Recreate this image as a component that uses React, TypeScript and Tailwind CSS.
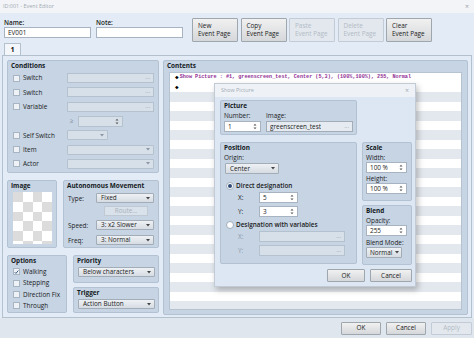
import React from 'react';

type Kids = { children?: React.ReactNode; className?: string };

const Group = ({ title, className = '', children }: Kids & { title: string }) => (
  <div className={`rounded-[2px] border border-[#b2c2d3] bg-[#c6d4e4] ${className}`}>
    <div className="pl-[3px] text-[6.4px] font-bold leading-[10px] text-[#141a22]">{title}</div>
    {children}
  </div>
);

const Spin = () => (
  <svg width="4" height="7" viewBox="0 0 4 7" className="shrink-0">
    <path d="M0.5 2.5 L2 0.8 L3.5 2.5 Z" fill="#555" />
    <path d="M0.5 4.5 L2 6.2 L3.5 4.5 Z" fill="#555" />
  </svg>
);

const Arrow = ({ dim }: { dim?: boolean }) => (
  <svg width="4" height="3" viewBox="0 0 4 3" className="shrink-0">
    <path d="M0 0 L4 0 L2 2.5 Z" fill={dim ? '#8a96a4' : '#444'} />
  </svg>
);

const Field = ({
  value = '',
  className = '',
  spin,
  dots,
  disabled,
}: {
  value?: string;
  className?: string;
  spin?: boolean;
  dots?: boolean;
  disabled?: boolean;
}) => (
  <div
    className={`flex items-center justify-between border px-[3px] text-[6.4px] ${
      disabled ? 'border-[#b4c1cf] bg-[#d7dfe8] text-[#9aa6b3]' : 'border-[#a7b3c0] bg-white text-[#1b1b1b]'
    } ${className}`}
  >
    <span className="truncate">{value}</span>
    {spin && <Spin />}
    {dots && <span className="text-[6px] leading-none text-[#7e8a97]">···</span>}
  </div>
);

const Drop = ({ value = '', className = '', disabled }: { value?: string; className?: string; disabled?: boolean }) => (
  <div
    className={`flex items-center justify-between rounded-[1px] border pl-[4px] pr-[3px] text-[6.4px] ${
      disabled
        ? 'border-[#b4c1cf] bg-[#d7dfe8]'
        : 'border-[#a3adb8] bg-gradient-to-b from-[#eef1f4] to-[#d6dce3] text-[#1b1b1b]'
    } ${className}`}
  >
    <span className="whitespace-nowrap">{value}</span>
    <Arrow dim={disabled} />
  </div>
);

const Btn = ({ children, className = '', disabled }: Kids & { disabled?: boolean }) => (
  <div
    className={`flex items-center rounded-[1px] border text-[6.4px] leading-[8px] ${
      disabled
        ? 'border-[#c3ccd6] bg-[#e3e8ee] text-[#b2bbc5]'
        : 'border-[#9ea6ae] bg-gradient-to-b from-[#f1f1f1] to-[#d5d7da] text-[#1b1b1b]'
    } ${className}`}
  >
    {children}
  </div>
);

const Check = ({ label, checked, className = '' }: { label: string; checked?: boolean; className?: string }) => (
  <div className={`flex items-center gap-[3px] text-[6.4px] text-[#1b1b1b] ${className}`}>
    <div className="flex h-[7px] w-[7px] shrink-0 items-center justify-center border border-[#a7b4c2] bg-[#eef2f6]">
      {checked && (
        <svg width="6" height="6" viewBox="0 0 6 6">
          <path d="M0.8 3.2 L2.3 4.7 L5.2 1.2" stroke="#1d3b64" strokeWidth="1" fill="none" />
        </svg>
      )}
    </div>
    <span>{label}</span>
  </div>
);

const Radio = ({ label, on }: { label: string; on?: boolean }) => (
  <div className="flex h-[10px] items-center gap-[2px] text-[6.4px] font-semibold text-[#1b1b1b]">
    <div className="flex h-[8px] w-[8px] items-center justify-center rounded-full border border-[#9fadbc] bg-white">
      {on && <div className="h-[4px] w-[4px] rounded-full bg-[#2c4a73]" />}
    </div>
    <span>{label}</span>
  </div>
);

const Lbl = ({ children, className = '' }: Kids) => (
  <div className={`text-[6.4px] leading-[9px] text-[#1b1b1b] ${className}`}>{children}</div>
);

export default function App() {
  const rows = Array.from({ length: 25 });
  return (
    <div className="relative h-[338px] w-[474px] overflow-hidden bg-[#e3ecf6] font-['Open_Sans',sans-serif]">
      {/* title bar */}
      <div className="flex h-[13px] items-center justify-between bg-[#f2f4f7] pl-[3px] pr-[5px]">
        <span className="text-[5.4px] text-[#a2aab3]">ID:001 - Event Editor</span>
        <span className="text-[7px] leading-none text-[#9aa2ab]">×</span>
      </div>

      {/* name / note / page buttons */}
      <div className="flex h-[30px] items-start pl-[4px] pt-[5px]">
        <div className="w-[87px]">
          <Lbl className="h-[9px] font-semibold">Name:</Lbl>
          <Field value="EV001" className="h-[11px]" />
        </div>
        <div className="ml-[5px] w-[87px]">
          <Lbl className="h-[9px] font-semibold">Note:</Lbl>
          <Field className="h-[11px]" />
        </div>
        <div className="ml-[9px] flex gap-[2.5px]">
          {[
            ['New', false],
            ['Copy', false],
            ['Paste', true],
            ['Delete', true],
            ['Clear', false],
          ].map(([t, d]) => (
            <Btn key={t as string} disabled={d as boolean} className="h-[24px] w-[46px] pl-[5px]">
              <div>
                {t as string}
                <br />
                Event Page
              </div>
            </Btn>
          ))}
        </div>
      </div>

      {/* tab */}
      <div className="ml-[4px] flex h-[12px] w-[17px] items-center justify-center border border-b-0 border-[#b3c1cf] bg-[#f3f7fb] text-[6.4px] font-bold">
        1
      </div>

      {/* tab panel */}
      <div className="ml-[2px] flex h-[263px] w-[470px] border border-[#b3c1cf] pl-[4px] pr-[3px] pt-[4px]">
        {/* left column */}
        <div className="flex w-[152px] flex-col">
          <Group title="Conditions" className="h-[113px]">
            <div className="pl-[5px] pr-[4px]">
              {['Switch', 'Switch', 'Variable'].map((t, i) => (
                <div key={i} className="flex h-[14.3px] items-center justify-between">
                  <Check label={t} />
                  <Field disabled dots className="h-[10px] w-[87px]" />
                </div>
              ))}
              <div className="flex h-[14.3px] items-center">
                <span className="ml-[57px] text-[6.4px] text-[#8b97a4]">≥</span>
                <Field disabled spin className="ml-[4px] h-[11px] w-[45px]" />
              </div>
              <div className="flex h-[14.3px] items-center">
                <Check label="Self Switch" />
                <Drop disabled className="ml-auto mr-[46px] h-[10px] w-[41px]" />
              </div>
              {['Item', 'Actor'].map((t) => (
                <div key={t} className="flex h-[14.3px] items-center justify-between">
                  <Check label={t} />
                  <Drop disabled className="h-[10px] w-[87px]" />
                </div>
              ))}
            </div>
          </Group>

          <div className="mt-[7px] flex h-[68px] gap-[6px]">
            <Group title="Image" className="w-[50px]">
              <div className="ml-[5px] mt-[1px] grid h-[52px] w-[39px] grid-cols-4 overflow-hidden bg-white">
                {Array.from({ length: 24 }).map((_, i) => (
                  <div
                    key={i}
                    className={`h-[9.75px] ${(Math.floor(i / 4) + (i % 4)) % 2 ? 'bg-white' : 'bg-[#dcdcdc]'}`}
                  />
                ))}
              </div>
            </Group>
            <Group title="Autonomous Movement" className="flex-1">
              <div className="pl-[4px] pr-[4px]">
                <div className="mt-[2px] flex h-[10px] items-center justify-between">
                  <Lbl>Type:</Lbl>
                  <Drop value="Fixed" className="h-[10px] w-[58px]" />
                </div>
                <div className="mt-[3px] flex justify-end pr-[6px]">
                  <div className="flex h-[10px] w-[44px] items-center justify-center border border-[#bfc9d4] bg-[#d9e1ea] text-[6.4px] text-[#a8b2bd]">
                    Route...
                  </div>
                </div>
                <div className="mt-[4px] flex h-[10px] items-center justify-between">
                  <Lbl>Speed:</Lbl>
                  <Drop value="3: x2 Slower" className="h-[10px] w-[58px]" />
                </div>
                <div className="mt-[5px] flex h-[10px] items-center justify-between">
                  <Lbl>Freq:</Lbl>
                  <Drop value="3: Normal" className="h-[10px] w-[58px]" />
                </div>
              </div>
            </Group>
          </div>

          <div className="mt-[7px] flex h-[58px] gap-[6px]">
            <Group title="Options" className="w-[60px]">
              <div className="flex flex-col gap-[1.7px] pl-[5px] pt-[1px]">
                <Check label="Walking" checked />
                <Check label="Stepping" />
                <Check label="Direction Fix" />
                <Check label="Through" />
              </div>
            </Group>
            <div className="flex flex-1 flex-col gap-[4px]">
              <Group title="Priority" className="h-[28px]">
                <Drop value="Below characters" className="ml-[4px] mt-[1px] h-[10px] w-[77px]" />
              </Group>
              <Group title="Trigger" className="h-[26px]">
                <Drop value="Action Button" className="ml-[4px] mt-[1px] h-[10px] w-[77px]" />
              </Group>
            </div>
          </div>
        </div>

        {/* contents */}
        <Group title="Contents" className="ml-[4px] h-[255px] flex-1">
          <div className="mx-[5px] mt-[1px] h-[238px] overflow-hidden border border-[#b5c2cf] bg-white">
            {rows.map((_, i) => (
              <div
                key={i}
                className={`flex h-[9.5px] items-center pl-[5px] font-['Liberation_Mono',monospace] text-[5.15px] ${
                  i > 1 && i % 2 === 0 ? 'bg-[#e3e8ee]' : 'bg-white'
                }`}
              >
                {i === 0 && (
                  <>
                    <span className="mr-[1px] text-[6px] text-black">◆</span>
                    <span className="font-bold text-[#8f2f95]">
                      Show Picture : #1, greenscreen_test, Center (5,3), (100%,100%), 255, Normal
                    </span>
                  </>
                )}
                {i === 1 && <span className="text-[6px] text-black">◆</span>}
              </div>
            ))}
          </div>
        </Group>
      </div>

      {/* bottom buttons */}
      <div className="flex h-[20px] items-center justify-end gap-[5px] bg-[#dfe6ee] pr-[2px]">
        <Btn className="h-[13px] w-[40px] justify-center">OK</Btn>
        <Btn className="h-[13px] w-[40px] justify-center">Cancel</Btn>
        <Btn disabled className="h-[13px] w-[41px] justify-center">
          Apply
        </Btn>
      </div>

      {/* Show Picture dialog */}
      <div className="absolute left-[214px] top-[83px] h-[204px] w-[202px] border border-[#c2cbd5] bg-[#dce7f3] shadow-[2px_3px_6px_rgba(0,0,0,0.25)]">
        <div className="flex h-[13px] items-center justify-between bg-[#eef2f7] pl-[6px] pr-[6px]">
          <span className="text-[5.4px] text-[#a2aab3]">Show Picture</span>
          <span className="text-[7px] leading-none text-[#a2aab3]">×</span>
        </div>
        <div className="flex pl-[5px] pt-[3px]">
          <div className="flex w-[137px] flex-col">
            <Group title="Picture" className="h-[35px]">
              <div className="flex gap-[5px] pl-[3px]">
                <div>
                  <Lbl>Number:</Lbl>
                  <Field value="1" spin className="mt-[1px] h-[11px] w-[37px]" />
                </div>
                <div>
                  <Lbl>Image:</Lbl>
                  <Field value="greenscreen_test" dots className="mt-[1px] h-[11px] w-[87px] !border-[#a3adb8] !bg-[#e6ebf1]" />
                </div>
              </div>
            </Group>
            <Group title="Position" className="mt-[7px] h-[122px]">
              <div className="pl-[3px]">
                <Lbl>Origin:</Lbl>
                <Drop value="Center" className="ml-[1px] mt-[1px] h-[11px] w-[54px]" />
                <div className="mt-[7px] pl-[2px]">
                  <Radio label="Direct designation" on />
                </div>
                <div className="mt-[1px] flex h-[11px] items-center pl-[14px]">
                  <Lbl className="w-[21px]">X:</Lbl>
                  <Field value="5" spin className="h-[11px] w-[39px]" />
                </div>
                <div className="mt-[3px] flex h-[11px] items-center pl-[14px]">
                  <Lbl className="w-[21px]">Y:</Lbl>
                  <Field value="3" spin className="h-[11px] w-[39px]" />
                </div>
                <div className="mt-[3px] pl-[2px]">
                  <Radio label="Designation with variables" />
                </div>
                <div className="mt-[1px] flex h-[11px] items-center pl-[14px]">
                  <Lbl className="w-[21px] !text-[#8d99a6]">X:</Lbl>
                  <Field disabled dots className="h-[11px] w-[86px]" />
                </div>
                <div className="mt-[3px] flex h-[11px] items-center pl-[14px]">
                  <Lbl className="w-[21px] !text-[#8d99a6]">Y:</Lbl>
                  <Field disabled dots className="h-[11px] w-[86px]" />
                </div>
              </div>
            </Group>
          </div>
          <div className="ml-[5px] flex w-[50px] flex-col">
            <Group title="Scale" className="mt-[42px] h-[59px]">
              <div className="pl-[3px]">
                <Lbl>Width:</Lbl>
                <Field value="100 %" spin className="h-[11px] w-[41px]" />
                <Lbl className="mt-[1px]">Height:</Lbl>
                <Field value="100 %" spin className="h-[11px] w-[41px]" />
              </div>
            </Group>
            <Group title="Blend" className="mt-[4px] h-[60px]">
              <div className="pl-[3px]">
                <Lbl>Opacity:</Lbl>
                <Field value="255" spin className="h-[11px] w-[41px]" />
                <Lbl className="mt-[2px]">Blend Mode:</Lbl>
                <Drop value="Normal" className="h-[11px] w-[36px] !pl-[3px] !pr-[2px]" />
              </div>
            </Group>
          </div>
        </div>
        <div className="mt-[4px] flex justify-end gap-[5px] pr-[3px]">
          <Btn className="h-[13px] w-[38px] justify-center">OK</Btn>
          <Btn className="h-[13px] w-[42px] justify-center">Cancel</Btn>
        </div>
      </div>
    </div>
  );
}
